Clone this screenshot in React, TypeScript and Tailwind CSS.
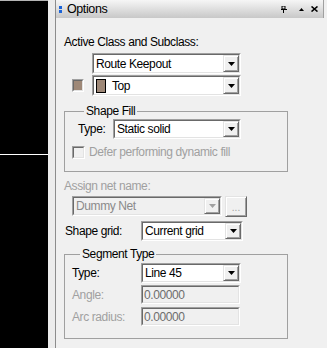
import clsx from "clsx";

const font = "font-['Liberation_Sans',Arial,sans-serif] text-[12px] tracking-[-0.4px] leading-[14px]";

function Arrow({ disabled }: { disabled?: boolean }) {
  return (
    <svg width="7" height="4" viewBox="0 0 7 4">
      <polygon points="0,0 7,0 3.5,4" fill={disabled ? "#a0a0a0" : "#000"} />
    </svg>
  );
}

function DropButton({ disabled }: { disabled?: boolean }) {
  return (
    <div className="w-[16px] h-full flex items-center justify-center bg-[#f0f0f0] border border-t-[#e3e3e3] border-l-[#e3e3e3] border-r-[#696969] border-b-[#696969] shadow-[inset_1px_1px_0_#fff,inset_-1px_-1px_0_#a0a0a0]">
      <Arrow disabled={disabled} />
    </div>
  );
}

function Sunken({ className, inner, children }: { className: string; inner: string; children: React.ReactNode }) {
  return (
    <div className={clsx("flex border border-t-[#a0a0a0] border-l-[#a0a0a0] border-r-white border-b-white", className)}>
      <div className={clsx("flex flex-1 min-w-0 border border-t-[#696969] border-l-[#696969] border-r-[#e3e3e3] border-b-[#e3e3e3]", inner)}>
        {children}
      </div>
    </div>
  );
}

function Combo({ size, children, disabled }: { size: string; children: React.ReactNode; disabled?: boolean }) {
  return (
    <Sunken className={size} inner={disabled ? "bg-[#f0f0f0]" : "bg-white"}>
      <div className={clsx("flex-1 flex items-center pl-[2px]", disabled ? "text-[#8a8a8a]" : "text-black")}>{children}</div>
      <DropButton disabled={disabled} />
    </Sunken>
  );
}

function Field({ value }: { value: string }) {
  return (
    <Sunken className="w-[99px] h-[19px]" inner="bg-[#f0f0f0]">
      <div className="flex-1 flex items-center pl-[1px] text-[#6d6d6d]">{value}</div>
    </Sunken>
  );
}

export default function App() {
  return (
    <div className={clsx("w-[327px] h-[348px] flex bg-[#f0f0f0] overflow-hidden text-black", font)}>
      {/* canvas strip */}
      <div className="w-[48px] h-full flex flex-col bg-black border-t border-[#b4b4b4]">
        <div className="h-[153px]" />
        <div className="h-px bg-white" />
      </div>
      <div className="w-[7px] h-full bg-[#ececec]" />
      <div className="w-px h-full bg-[#8c8c8c]" />

      {/* Options panel */}
      <div className="w-[268px] h-full flex flex-col">
        <div className="h-[18px] flex items-center pl-[3px] pr-[5px] bg-linear-to-b from-[#f6f6f6] to-[#c8c8c8] border-r border-[#a0a0a0]">
          <div className="flex flex-col gap-px">
            <div className="w-[3px] h-[3px] bg-[#1c64d8]" />
            <div className="w-[3px] h-[3px] bg-[#1c64d8]" />
          </div>
          <span className="ml-[5px] text-[12.5px]">Options</span>
          <div className="ml-auto flex items-center">
            <svg width="6" height="7" viewBox="0 0 6 7" className="mr-[12px]">
              <rect x="1" y="0" width="3" height="3" fill="none" stroke="#000" strokeWidth="1" />
              <rect x="0" y="3" width="6" height="1" fill="#000" />
              <rect x="2" y="4" width="1" height="3" fill="#000" />
            </svg>
            <svg width="5" height="3" viewBox="0 0 5 3" className="mr-[7px]">
              <polygon points="0,3 5,3 2.5,0" fill="#000" />
            </svg>
            <svg width="7" height="6" viewBox="0 0 7 6">
              <path d="M0.5 0.5 L6.5 5.5 M6.5 0.5 L0.5 5.5" stroke="#000" strokeWidth="1.6" />
            </svg>
          </div>
        </div>

        <div className="flex flex-col pl-[8px] pt-[17px]">
          <div>Active Class and Subclass:</div>
          <div className="mt-[4px] ml-[28px]">
            <Combo size="w-[149px] h-[21px]">Route Keepout</Combo>
          </div>
          <div className="mt-[1px] flex items-center">
            <Sunken className="ml-[8px] w-[12px] h-[13px]" inner="bg-[#9e8877]">
              <span />
            </Sunken>
            <div className="ml-[8px]">
              <Combo size="w-[149px] h-[21px]">
                <span className="w-[10px] h-[14px] border border-black bg-[#9e8877] mr-[6px]" />
                Top
              </Combo>
            </div>
          </div>

          <fieldset className="mt-[8px] w-[224px] border border-[#a0a0a0] pl-[13px] pb-[12px]">
            <legend className="ml-[6px] px-[2px]">Shape Fill</legend>
            <div className="mt-px flex items-center">
              <span className="w-[35px]">Type:</span>
              <Combo size="w-[128px] h-[20px]">Static solid</Combo>
            </div>
            <div className="mt-[6px] -ml-[6px] flex items-center text-[#a0a0a0]">
              <Sunken className="w-[13px] h-[13px]" inner="bg-[#f0f0f0]">
                <span />
              </Sunken>
              <span className="ml-[4px]">Defer performing dynamic fill</span>
            </div>
          </fieldset>

          <div className="mt-[7px] text-[#a0a0a0]">Assign net name:</div>
          <div className="mt-[3px] ml-[8px] flex items-start">
            <Combo size="w-[150px] h-[20px]" disabled>Dummy Net</Combo>
            <div className="ml-[3px] w-[22px] h-[21px] flex items-end justify-center pb-[3px] text-[#a0a0a0] border border-t-[#e3e3e3] border-l-[#e3e3e3] border-r-[#696969] border-b-[#696969] shadow-[inset_1px_1px_0_#fff,inset_-1px_-1px_0_#a0a0a0] text-[10px] leading-[10px] tracking-normal">
              ...
            </div>
          </div>
          <div className="mt-[4px] ml-px flex items-center">
            <span className="w-[76px]">Shape grid:</span>
            <Combo size="w-[102px] h-[20px]">Current grid</Combo>
          </div>

          <fieldset className="mt-[6px] w-[224px] border border-[#a0a0a0] pl-[7px] pb-[12px]">
            <legend className="ml-[8px] px-[2px]">Segment Type</legend>
            <div className="mt-[2px] flex items-center">
              <span className="w-[69px]">Type:</span>
              <Combo size="w-[100px] h-[20px]">Line 45</Combo>
            </div>
            <div className="mt-[2px] flex items-center text-[#a0a0a0]">
              <span className="w-[69px]">Angle:</span>
              <Field value="0.00000" />
            </div>
            <div className="mt-[3px] flex items-center text-[#a0a0a0]">
              <span className="w-[69px]">Arc radius:</span>
              <Field value="0.00000" />
            </div>
          </fieldset>
        </div>
      </div>
    </div>
  );
}
